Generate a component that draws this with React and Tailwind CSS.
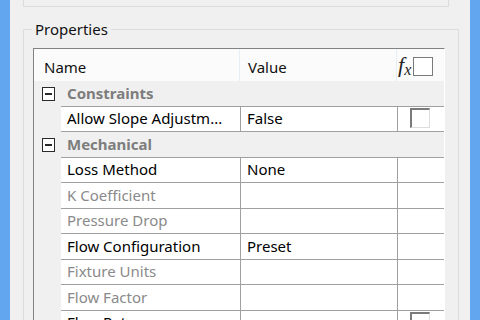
import React from "react";

const font = { fontFamily: '"Noto Sans", "Open Sans", sans-serif' };

function Box() {
  return (
    <div className="w-[13px] h-[14px] border border-[#2a2a2a] bg-white flex items-center justify-center">
      <div className="w-[7px] h-[1.5px] bg-[#2a2a2a]" />
    </div>
  );
}

function Check() {
  return (
    <div className="w-[20px] h-[20px] bg-white border-t-2 border-l-2 border-[#7a7a7a] border-r border-b border-r-[#dedede] border-b-[#dedede]" />
  );
}

function Category({ label }) {
  return (
    <div className="flex h-[25.5px] bg-[#f0f0f0]">
      <div className="w-[27px] shrink-0 flex items-center pl-[8px]">
        <Box />
      </div>
      <div className="flex-1 border-b border-[#a0a0a0] flex items-center pl-[6px] font-bold text-[#7d7d7d]">
        {label}
      </div>
    </div>
  );
}

function Row({ name, value, gray, check }) {
  return (
    <div className="flex h-[25.5px]">
      <div className="w-[27px] shrink-0 bg-[#f0f0f0]" />
      <div className="flex-1 flex border-b border-[#a0a0a0] bg-white">
        <div
          className={
            "w-[179px] shrink-0 flex items-center pl-[6px] whitespace-nowrap overflow-hidden " +
            (gray ? "text-[#8a8a8a]" : "text-[#000]")
          }
        >
          {name}
        </div>
        <div className="w-[157px] shrink-0 border-l border-[#a0a0a0] flex items-center pl-[6px] text-[#000]">
          {value}
        </div>
        <div className="flex-1 border-l border-[#a0a0a0] flex items-start pt-[1px] pl-[12px]">
          {check ? <Check /> : null}
        </div>
      </div>
    </div>
  );
}

export default function App() {
  return (
    <div className="w-[480px] h-[320px] flex bg-[#62a6f0] overflow-hidden text-[15px] leading-none" style={font}>
      <div className="w-[10px] shrink-0" />
      <div className="w-[460px] shrink-0 bg-[#f0f0f0] overflow-hidden">
        <div className="ml-[13px] w-[426px] h-[7px] border-x border-b border-[#dcdcdc]" />
        <div className="ml-[13px] mt-[22px] w-[436px] h-[400px] border border-[#dcdcdc] relative">
          <div className="absolute left-[8px] top-[-11px] px-[3px] bg-[#f0f0f0] text-[#111] leading-[20px]">
            Properties
          </div>
          <div className="ml-[9px] mt-[18px] w-[412px] border-t border-l border-[#828282] border-r border-r-white bg-[#f0f0f0]">
            <div className="flex h-[32px] bg-[#fbfbfb] text-[#111]">
              <div className="w-[205px] shrink-0 flex items-center pl-[10px] pt-[4px]">Name</div>
              <div className="w-[157px] shrink-0 border-l border-[#e6eef6] flex items-center pl-[8px] pt-[4px]">
                Value
              </div>
              <div className="flex-1 border-l border-[#e6eef6] flex items-start pt-[5px] pl-[1px]">
                <span className="italic text-[22px] leading-none text-[#222]" style={{ fontFamily: '"Liberation Serif", serif' }}>
                  f
                  <span className="text-[16px] relative top-[3px]">x</span>
                </span>
                <div className="ml-[2px] mt-[3px] w-[20px] h-[19px] bg-white border border-[#7a7a7a]" />
              </div>
            </div>
            <Category label="Constraints" />
            <Row name="Allow Slope Adjustm..." value="False" check />
            <Category label="Mechanical" />
            <Row name="Loss Method" value="None" />
            <Row name="K Coefficient" gray />
            <Row name="Pressure Drop" gray />
            <Row name="Flow Configuration" value="Preset" />
            <Row name="Fixture Units" gray />
            <Row name="Flow Factor" gray />
            <Row name="Flow Rate" check />
          </div>
        </div>
      </div>
      <div className="w-[10px] shrink-0" />
    </div>
  );
}
